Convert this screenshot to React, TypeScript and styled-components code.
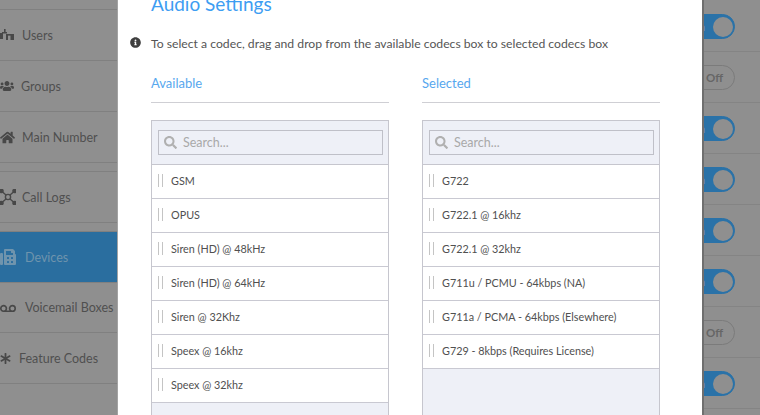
import React from "react";
import styled, { createGlobalStyle } from "styled-components";
import { FaAsterisk, FaFax, FaHome, FaInfoCircle, FaSearch, FaUsers, FaVoicemail } from "react-icons/fa";

const GlobalStyle = createGlobalStyle`
    html, body { margin: 0; padding: 0; background: #8f8f8f; }
    body { font-family: Lato, "Noto Sans", sans-serif; }
`;

const Page = styled.div`
    position: relative;
    display: flex;
    width: 760px;
    height: 415px;
    overflow: hidden;
    background: #8f8f8f;
`;

const Sidebar = styled.nav`
    width: 117px;
    padding-top: 9px;
    border-right: 1px solid #a3a3a3;
    flex-shrink: 0;
`;

const NavGroup = styled.div<{ $gap?: number }>`
    margin-top: ${(p) => p.$gap ?? 0}px;
    border-top: 1px solid #808080;
    border-bottom: 1px solid #808080;
`;

const NavItem = styled.div<{ $active?: boolean; $height?: number; $gap?: number }>`
    display: flex;
    align-items: center;
    gap: ${(p) => p.$gap ?? 7}px;
    height: ${(p) => p.$height ?? 50}px;
    background: ${(p) => (p.$active ? "#2a6e9f" : "transparent")};
    color: ${(p) => (p.$active ? "#6f94ad" : "#4f4f4f")};
    font-size: 12.5px;
    white-space: nowrap;
    svg { flex-shrink: 0; color: ${(p) => (p.$active ? "#6f94ad" : "#484848")}; }
    & + & { border-top: 1px solid #808080; }
`;

const Content = styled.div`
    flex: 1;
    padding-top: 1px;
`;

const ToggleRow = styled.div`
    display: flex;
    justify-content: flex-end;
    height: 50px;
    padding-right: 25px;
    border-bottom: 1px solid #848484;
`;

const Toggle = styled.div<{ $on: boolean }>`
    width: 50px;
    height: 25px;
    margin-top: 13px;
    box-sizing: border-box;
    display: flex;
    align-items: center;
    justify-content: flex-end;
    gap: 8px;
    padding-right: ${(p) => (p.$on ? 1 : 11)}px;
    border-radius: 13px;
    border: 1px solid ${(p) => (p.$on ? "#2a72a8" : "#7b7b7b")};
    background: ${(p) => (p.$on ? "#2a72a8" : "transparent")};
    color: ${(p) => (p.$on ? "#7d9db3" : "#666")};
    font-size: 11.5px;
    font-weight: 700;
`;

const Knob = styled.span`
    width: 20px;
    height: 20px;
    border-radius: 50%;
    background: #8f8f8f;
`;

const Modal = styled.div`
    position: absolute;
    top: 0;
    left: 118px;
    width: 584px;
    height: 415px;
    box-sizing: border-box;
    padding: 0 42px 0 33px;
    background: #fff;
    box-shadow: 2px 0 0 #6f6f6f;
    overflow: hidden;
`;

const Title = styled.h2`
    margin: -10px 0 0;
    height: 27px;
    color: #3d9df2;
    font-size: 19px;
    font-weight: 400;
    line-height: 27px;
`;

const Hint = styled.div`
    position: relative;
    margin-top: 18px;
    height: 18px;
    color: #555;
    font-size: 12.2px;
    line-height: 18px;
    white-space: nowrap;
`;

const HintIcon = styled.span`
    position: absolute;
    left: -21px;
    top: 0;
    color: #3f3f3f;
    font-size: 11px;
`;

const Columns = styled.div`
    display: grid;
    grid-template-columns: 238px 238px;
    gap: 33px;
    margin-top: 20px;
`;

const ColumnTitle = styled.div`
    height: 29px;
    border-bottom: 1px solid #cfcfd4;
    color: #57a7ee;
    font-size: 13px;
    line-height: 20px;
`;

const ListBox = styled.div`
    margin-top: 17px;
    height: 300px;
    box-sizing: border-box;
    border: 1px solid #c6c6ce;
    border-bottom: 0;
    background: #eef0f7;
`;

const SearchBar = styled.div`
    height: 44px;
    box-sizing: border-box;
    padding: 9px 5px 9px 6px;
    border-bottom: 1px solid #c6c6ce;
`;

const SearchField = styled.div`
    display: flex;
    align-items: center;
    gap: 6px;
    height: 100%;
    box-sizing: border-box;
    padding-left: 5px;
    border: 1px solid #bfc0c8;
    color: #a9a9a9;
    font-size: 12.5px;
    svg { color: #b0b0b0; font-size: 13px; }
`;

const Row = styled.div`
    display: flex;
    align-items: center;
    gap: 8px;
    height: 34px;
    box-sizing: border-box;
    padding: 0 0 2px 6px;
    border-bottom: 1px solid #c9c9d2;
    background: #fff;
    color: #505050;
    font-size: 10.8px;
`;

const Grip = styled.span`
    width: 3px;
    height: 13px;
    border-left: 1px solid #c4c4c4;
    border-right: 1px solid #c4c4c4;
    flex-shrink: 0;
`;

const CallLogsIcon = () => (
    <svg width="16" height="16" viewBox="0 0 16 16" fill="none" stroke="#484848" strokeWidth="1.4">
        <circle cx="8" cy="8" r="2.6" />
        <circle cx="1.5" cy="2" r="1.6" fill="#484848" />
        <circle cx="14.5" cy="2" r="1.6" fill="#484848" />
        <circle cx="1.5" cy="14" r="1.6" fill="#484848" />
        <circle cx="14.5" cy="14" r="1.6" fill="#484848" />
        <path d="M2.5 3l3.5 3M13.5 3L10 6M2.5 13L6 10M13.5 13L10 10" />
    </svg>
);

const UsersIcon = () => (
    <svg width="15" height="14" viewBox="0 0 15 14" fill="#484848">
        <rect x="0" y="5" width="3" height="6" />
        <rect x="4" y="1" width="1.6" height="3.5" />
        <rect x="2" y="4" width="5" height="1.5" />
        <rect x="6" y="7" width="2" height="5" />
        <rect x="6" y="6" width="8" height="1.6" />
        <rect x="10.5" y="7" width="3.5" height="5" />
    </svg>
);

const available = ["GSM", "OPUS", "Siren (HD) @ 48kHz", "Siren (HD) @ 64kHz", "Siren @ 32Khz", "Speex @ 16khz", "Speex @ 32khz"];
const selected = ["G722", "G722.1 @ 16khz", "G722.1 @ 32khz", "G711u / PCMU - 64kbps (NA)", "G711a / PCMA - 64kbps (Elsewhere)", "G729 - 8kbps (Requires License)"];
const toggles = [true, false, true, true, true, true, false, true];

const CodecColumn = ({ title, codecs }: { title: string; codecs: string[] }) => (
    <div>
        <ColumnTitle>{title}</ColumnTitle>
        <ListBox>
            <SearchBar>
                <SearchField>
                    <FaSearch />
                    Search...
                </SearchField>
            </SearchBar>
            {codecs.map((codec) => (
                <Row key={codec}>
                    <Grip />
                    {codec}
                </Row>
            ))}
        </ListBox>
    </div>
);

export default function App() {
    return (
        <Page>
            <GlobalStyle />
            <Sidebar>
                <NavGroup>
                    <NavItem>
                        <UsersIcon />
                        Users
                    </NavItem>
                    <NavItem>
                        <FaUsers size={14} />
                        Groups
                    </NavItem>
                    <NavItem>
                        <FaHome size={15} />
                        Main Number
                    </NavItem>
                </NavGroup>
                <NavGroup $gap={8}>
                    <NavItem $gap={6}>
                        <CallLogsIcon />
                        Call Logs
                    </NavItem>
                </NavGroup>
                <NavGroup $gap={8}>
                    <NavItem $active $gap={9}>
                        <FaFax size={16} />
                        Devices
                    </NavItem>
                    <NavItem $height={49} $gap={9}>
                        <FaVoicemail size={16} />
                        Voicemail Boxes
                    </NavItem>
                    <NavItem $gap={8}>
                        <FaAsterisk size={11} />
                        Feature Codes
                    </NavItem>
                </NavGroup>
            </Sidebar>
            <Content>
                {toggles.map((on, i) => (
                    <ToggleRow key={i}>
                        <Toggle $on={on}>
                            {on ? "On" : "Off"}
                            {on && <Knob />}
                        </Toggle>
                    </ToggleRow>
                ))}
            </Content>
            <Modal>
                <Title>Audio Settings</Title>
                <Hint>
                    <HintIcon>
                        <FaInfoCircle />
                    </HintIcon>
                    To select a codec, drag and drop from the available codecs box to selected codecs box
                </Hint>
                <Columns>
                    <CodecColumn title="Available" codecs={available} />
                    <CodecColumn title="Selected" codecs={selected} />
                </Columns>
            </Modal>
        </Page>
    );
}
